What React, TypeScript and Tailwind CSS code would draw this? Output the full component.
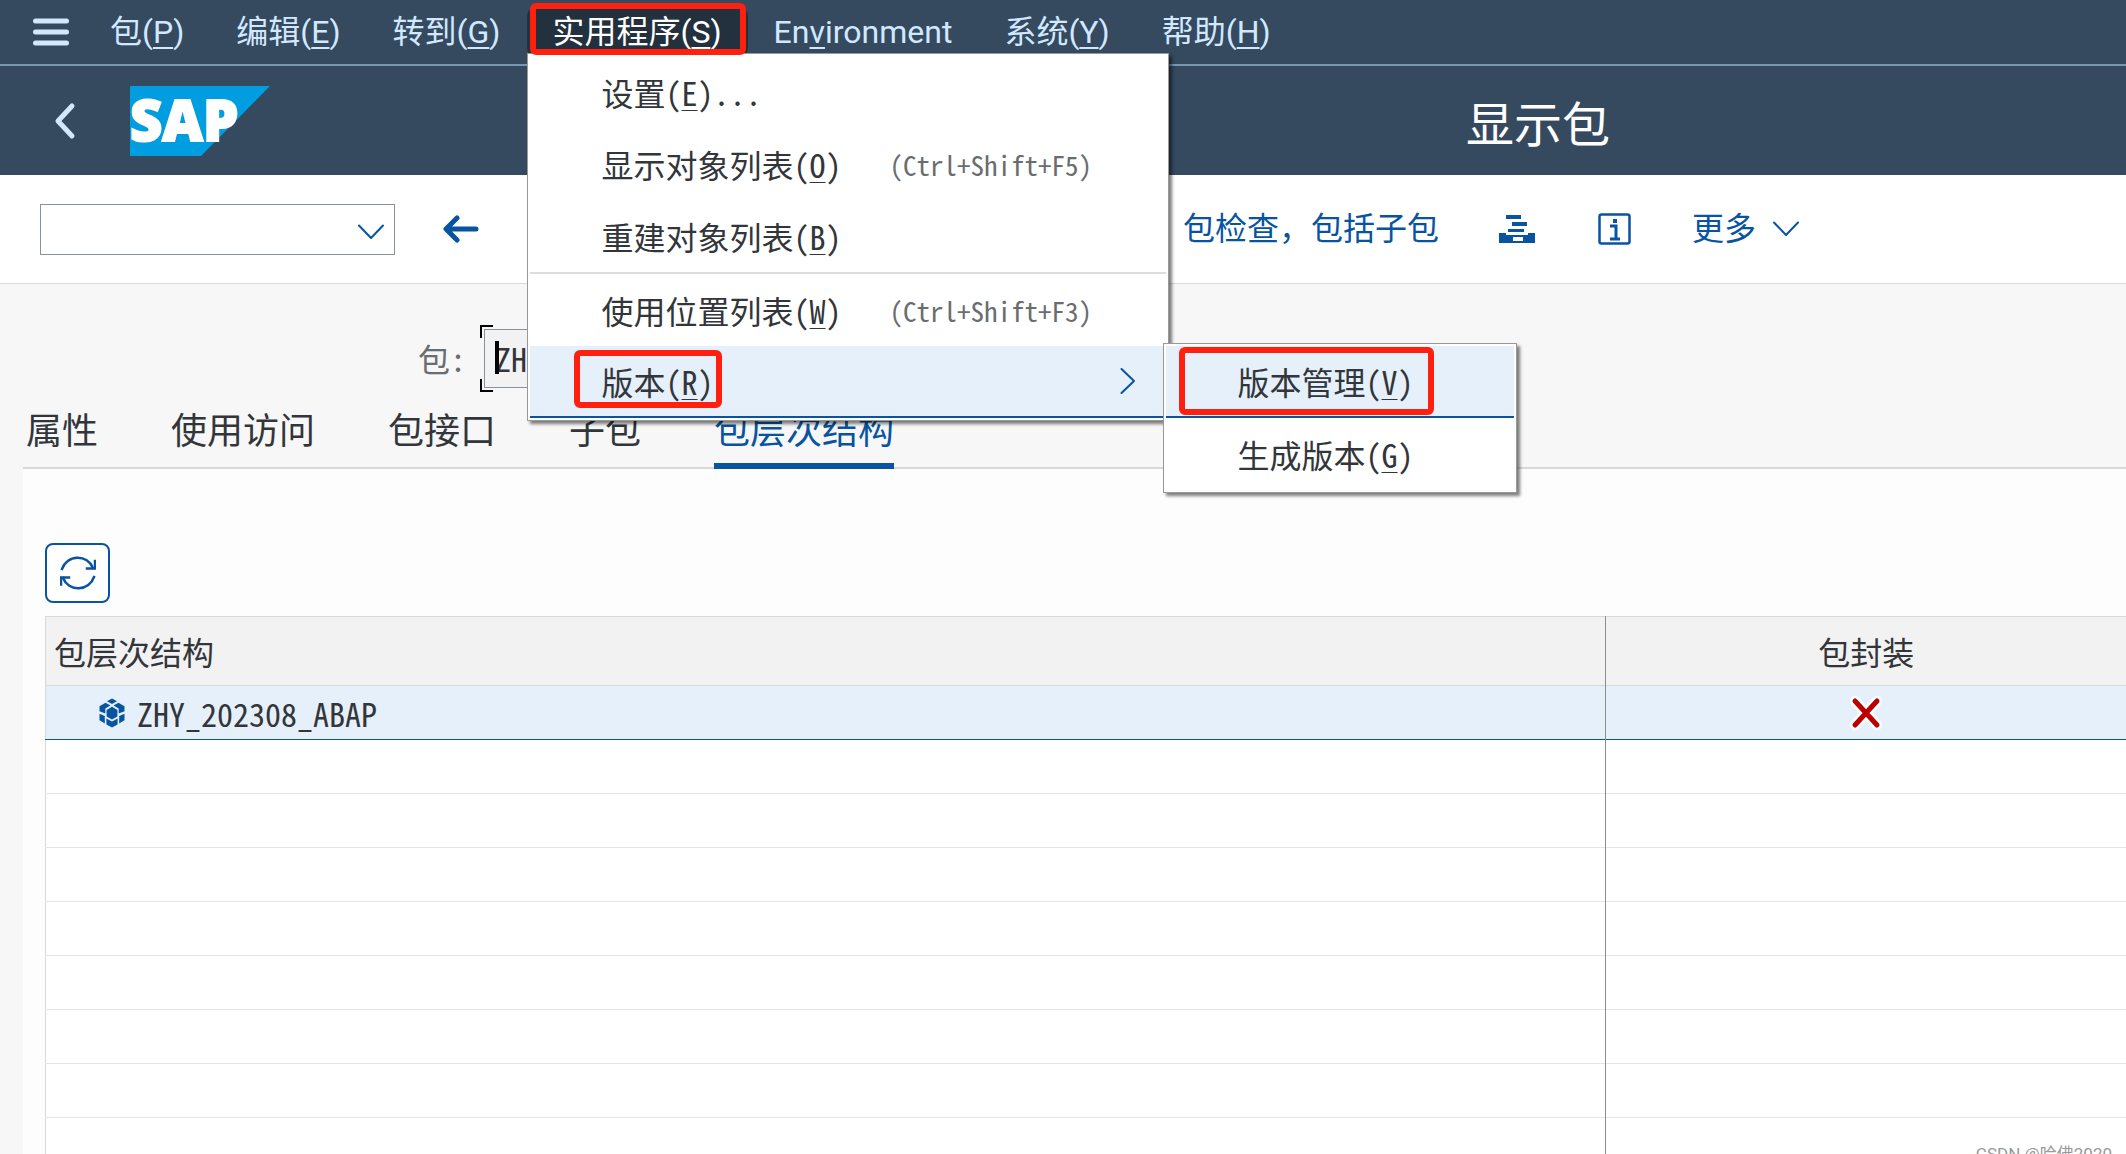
import React from 'react';
import clsx from 'clsx';

interface MenuEntry {
  label: string;
  accessKey: string;
  suffix?: string;
  shortcut?: string;
}

const MENUS = [
  { before: '包(', accessKey: 'P', after: ')' },
  { before: '编辑(', accessKey: 'E', after: ')' },
  { before: '转到(', accessKey: 'G', after: ')' },
  { before: '实用程序(', accessKey: 'S', after: ')', active: true },
  { before: 'En', accessKey: 'v', after: 'ironment' },
  { before: '系统(', accessKey: 'Y', after: ')' },
  { before: '帮助(', accessKey: 'H', after: ')' },
];

const UTILITY_ENTRIES: MenuEntry[] = [
  { label: '设置', accessKey: 'E', suffix: '...' },
  { label: '显示对象列表', accessKey: 'O', shortcut: '(Ctrl+Shift+F5)' },
  { label: '重建对象列表', accessKey: 'B' },
];

const TABS = ['属性', '使用访问', '包接口', '子包', '包层次结构'];
const ACTIVE_TAB = '包层次结构';
const EMPTY_ROWS = [1, 2, 3, 4, 5, 6, 7, 8];

const UI_FONT = "font-[Roboto,'Noto_Sans_CJK_SC',sans-serif]";
const TEXT_FONT = "font-['Noto_Sans_Mono_CJK_SC','Noto_Sans_CJK_SC',monospace] font-light";
const POPUP = 'absolute border border-[#999999] bg-white p-[2px] shadow-[3px_3px_3px_rgba(0,0,0,0.5)]';

const Highlight: React.FC<{ className: string }> = ({ className }) => (
  <span
    aria-hidden="true"
    className={clsx('pointer-events-none absolute rounded-md border-[6px] border-[#ff2010]', className)}
  />
);

const EntryText: React.FC<{ entry: MenuEntry }> = ({ entry }) => (
  <span>
    {entry.label}(<span className="underline decoration-1 underline-offset-4">{entry.accessKey}</span>)
    {entry.suffix}
  </span>
);

const PopupItem: React.FC<{ entry: MenuEntry }> = ({ entry }) => (
  <button type="button" role="menuitem" className="flex h-[72px] w-full items-center pl-[72px] text-left">
    <EntryText entry={entry} />
    {entry.shortcut && <span className="ml-12 text-[27px] text-[#6a6d70]">{entry.shortcut}</span>}
  </button>
);

const SapLogo = () => (
  <svg viewBox="0 0 140 70" className="h-[70px] w-[140px]" role="img" aria-label="SAP">
    <path d="M0 0H140L71 70H0Z" fill="#009de0" />
    <text
      x="0"
      y="55"
      fill="#fff"
      stroke="#fff"
      strokeWidth="2"
      fontFamily="'Open Sans', sans-serif"
      fontWeight="800"
      fontSize="56"
    >
      SAP
    </text>
  </svg>
);

const Chevron: React.FC<{ className?: string }> = ({ className }) => (
  <svg viewBox="0 0 28 16" className={clsx('h-4 w-7', className)} fill="none" stroke="#0854a0" strokeWidth="2">
    <path d="M2 1.5 14 14 26 1.5" strokeLinecap="round" strokeLinejoin="round" />
  </svg>
);

const PackageIcon = () => (
  <svg viewBox="0 0 26 30" className="h-[30px] w-[26px]" fill="#0854a0" aria-hidden="true">
    <path d="M13 0.5 18 3.3 13 6 8 3.3Z" />
    <path d="M13 8.8 18.4 12v6.4L13 21.6 7.6 18.4V12Z" />
    <path d="M6.6 4.8 11.4 7.4 6.3 10.6v5L0.5 13.2V8.2Z" />
    <path d="M19.4 4.8 14.6 7.4l5.1 3.2v5l5.8-2.4V8.2Z" />
    <path d="M0.5 15.8 5.8 18v7.4L0.5 22.2Z" />
    <path d="M25.5 15.8 20.2 18v7.4l5.3-3.2Z" />
    <path d="M7.4 20.6 13 23.6l5.6-3v5.8L13 29.6l-5.6-3.2Z" />
  </svg>
);

const App: React.FC = () => {
  return (
    <div className={clsx('relative flex min-h-screen flex-col overflow-hidden bg-[#f7f7f7] text-[32px] leading-none text-[#32363a]', TEXT_FONT)}>
      {/* Menu bar */}
      <nav className={clsx('relative z-10 flex h-[66px] items-center border-b-2 border-[#7996b4] bg-[#354a5f] pl-8 font-normal text-[#d1e8ff]', UI_FONT)}>
        <button type="button" aria-label="菜单" className="mr-[14px]">
          <svg viewBox="0 0 38 28" className="h-7 w-[38px]" fill="none" stroke="currentColor" strokeWidth="5" strokeLinecap="round">
            <path d="M3.5 3H34.500M3.500 14H34.500M3.500 25H34.500" />
          </svg>
        </button>
        {MENUS.map((menu) => (
          <div key={menu.accessKey} className="relative">
            <button
              type="button"
              className={clsx('h-12 rounded-lg px-[26px]', menu.active && 'bg-[#23303e] text-white')}
            >
              {menu.before}
              <span className="underline decoration-2 underline-offset-4">{menu.accessKey}</span>
              {menu.after}
            </button>

            {menu.active && (
              <>
                <div role="menu" className={clsx('top-[45px] left-0 w-[642px] text-[#32363a]', POPUP, TEXT_FONT)}>
                  {UTILITY_ENTRIES.map((entry) => (
                    <PopupItem key={entry.label} entry={entry} />
                  ))}
                  <hr className="border-t-2 border-[#dddddd]" />
                  <PopupItem entry={{ label: '使用位置列表', accessKey: 'W', shortcut: '(Ctrl+Shift+F3)' }} />

                  <div className="relative">
                    <button
                      type="button"
                      role="menuitem"
                      aria-haspopup="menu"
                      className="flex h-[72px] w-full items-center justify-between border-b-2 border-[#0854a0] bg-[#e5f0fa] pr-6 pl-[72px]"
                    >
                      <EntryText entry={{ label: '版本', accessKey: 'R' }} />
                      <Chevron className="-rotate-90" />
                    </button>
                    <Highlight className="top-1 left-11 h-[58px] w-[148px]" />

                    <div role="menu" className={clsx('-top-[3px] left-[633px] w-[354px]', POPUP)}>
                      <div className="relative border-b-2 border-[#0854a0] bg-[#e5f0fa]">
                        <button type="button" role="menuitem" className="flex h-[70px] w-full items-center pl-[72px]">
                          <EntryText entry={{ label: '版本管理', accessKey: 'V' }} />
                        </button>
                        <Highlight className="top-px left-[13px] h-[68px] w-[255px]" />
                      </div>
                      <PopupItem entry={{ label: '生成版本', accessKey: 'G' }} />
                    </div>
                  </div>
                </div>
                <Highlight className="-top-[5px] left-[3px] h-[52px] w-[216px]" />
              </>
            )}
          </div>
        ))}
      </nav>

      {/* Title bar */}
      <header className="flex h-[109px] items-center bg-[#354a5f] pl-[54px]">
        <button type="button" aria-label="返回">
          <svg viewBox="0 0 22 38" className="h-[38px] w-[22px]" fill="none" stroke="#d1e8ff" strokeWidth="5" strokeLinecap="round" strokeLinejoin="round">
            <path d="M18 4 4 19 18 34" />
          </svg>
        </button>
        <div className="ml-[54px]">
          <SapLogo />
        </div>
        <h1 className="ml-auto pr-[516px] text-[48px] text-white">显示包</h1>
      </header>

      {/* Toolbar */}
      <div className={clsx('flex h-[109px] items-center justify-between border-b border-[#d9d9d9] bg-white pr-[326px] pl-10 font-normal text-[#0854a0]', UI_FONT)}>
        <div className="flex items-center gap-12">
          <label className="relative block">
            <span className="sr-only">命令</span>
            <select className="block h-[51px] w-[355px] appearance-none border border-[#89919a] bg-white">
              <option> </option>
            </select>
            <Chevron className="pointer-events-none absolute top-5 right-2.5" />
          </label>
          <button type="button" aria-label="后退">
            <svg viewBox="0 0 36 28" className="h-7 w-9" fill="none" stroke="#0854a0" strokeWidth="5" strokeLinecap="round" strokeLinejoin="round">
              <path d="M33 14H4M14 3 3 14 14 25" />
            </svg>
          </button>
        </div>
        <div className="flex items-center">
          <button type="button">包检查，包括子包</button>
          <button type="button" aria-label="层次结构" className="ml-[60px]">
            <svg viewBox="0 0 36 28" className="h-7 w-9" fill="#0854a0">
              <path d="M7 0H22V4H7ZM13 7H28V11H13ZM9 14H25V17H9ZM0 18H7V20H29V18H36V28H0Z" />
              <path d="M14 22H24V26H14Z" fill="#fff" />
            </svg>
          </button>
          <button type="button" aria-label="信息" className="ml-[63px]">
            <svg viewBox="0 0 33 32" className="h-8 w-[33px]" fill="none" stroke="#0854a0" strokeWidth="2.500">
              <rect x="1.500" y="1.500" width="30" height="29" rx="2" />
              <path d="M12 13H18V25M12 26H22" strokeWidth="3" />
              <path d="M15 6H19V10H15Z" fill="#0854a0" stroke="none" />
            </svg>
          </button>
          <button type="button" className="ml-[61px] flex items-center gap-4">
            更多
            <Chevron />
          </button>
        </div>
      </div>

      {/* Package field */}
      <div className="flex h-[120px] items-center pt-[28px] pl-[418px]">
        <label htmlFor="package" className="w-[62px] text-[#6a6d70]">
          包:
        </label>
        <div className="relative p-1">
          <input
            id="package"
            readOnly
            value="ZHY_202308_ABAP"
            className="h-[59px] w-[420px] border border-[#89919a] bg-[#f2f2f2] pl-2.5"
          />
          <span className="absolute top-0 left-0 size-[13px] border-t-2 border-l-2 border-black" />
          <span className="absolute bottom-0 left-0 size-[13px] border-b-2 border-l-2 border-black" />
          <span className="absolute top-4 left-[15px] h-[33px] w-1 bg-black" />
        </div>
      </div>

      {/* Tabs */}
      <div role="tablist" className="ml-[23px] flex h-[65px] gap-[73px] border-b-2 border-[#d9d9d9] pl-[3px] text-[36px]">
        {TABS.map((tab) => (
          <button
            key={tab}
            type="button"
            role="tab"
            aria-selected={tab === ACTIVE_TAB}
            className={clsx(
              '-mb-0.5 border-b-[6px] pb-3',
              tab === ACTIVE_TAB ? 'border-[#0854a0] text-[#0854a0]' : 'border-transparent'
            )}
          >
            {tab}
          </button>
        ))}
      </div>

      {/* Hierarchy */}
      <main className="ml-[23px] flex-1 bg-[#fdfdfd] pt-[74px] pl-[22px]">
        <button
          type="button"
          aria-label="刷新"
          className="flex h-[60px] w-[65px] items-center justify-center rounded-lg border-2 border-[#0854a0] bg-white"
        >
          <svg viewBox="0 0 36 36" className="size-9" fill="none" stroke="#0854a0" strokeWidth="2.500" strokeLinecap="square">
            <path d="M2 14A16.500 16.500 0 0 1 33 13M34 22A16.500 16.500 0 0 1 3 23" />
            <path d="M35 6V13.500H27M1 29.500V22.500H9" />
          </svg>
        </button>

        <table className="mt-[13px] w-full table-fixed border-collapse border-t border-l border-[#d9d9d9] bg-white">
          <thead className="bg-[#f2f2f2]">
            <tr className="h-[69px] border-b border-[#d9d9d9]">
              <th className="w-3/4 border-r border-r-[#8c8c8c] pl-2 text-left font-light">包层次结构</th>
              <th className="font-light">包封装</th>
            </tr>
          </thead>
          <tbody>
            <tr className="h-[54px] border-b border-[#0854a0] bg-[#e5f0fa]">
              <td className="border-r border-r-[#8c8c8c]">
                <div className="flex items-center gap-3 pl-[53px]">
                  <PackageIcon />
                  ZHY_202308_ABAP
                </div>
              </td>
              <td>
                <svg viewBox="0 0 34 34" className="mx-auto size-[34px]" fill="none" strokeLinecap="round" role="img" aria-label="否">
                  <path d="M6 5 28 29M28 5 6 29" stroke="#fff" strokeWidth="10" />
                  <path d="M6 5 28 29M28 5 6 29" stroke="#bb0000" strokeWidth="5" />
                </svg>
              </td>
            </tr>
            {EMPTY_ROWS.map((row) => (
              <tr key={row} className={clsx('h-[54px]', row < 8 && 'border-b border-[#e5e5e5]')}>
                <td className="border-r border-r-[#8c8c8c]" />
                <td />
              </tr>
            ))}
          </tbody>
        </table>
      </main>

      <span className={clsx('absolute right-[14px] bottom-[9px] text-[17px] font-normal text-[#999999]', UI_FONT)}>
        CSDN @哈佛2020
      </span>
    </div>
  );
};

export default App;
